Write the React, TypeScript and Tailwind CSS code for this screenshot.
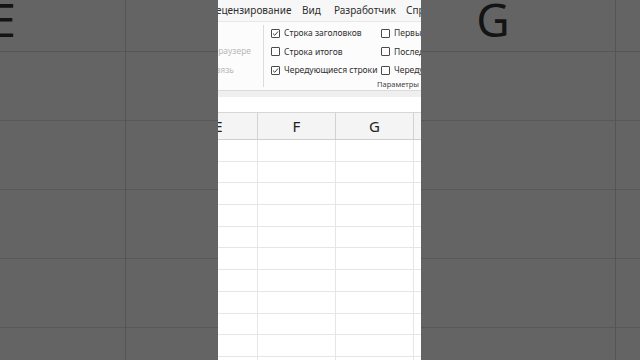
import React from "react";

const font = { fontFamily: '"Noto Sans", "Open Sans", sans-serif' };

function Box({ checked }: { checked?: boolean }) {
  return (
    <span className="w-[9px] h-[9px] border border-[#4a4a4a] rounded-[1px] bg-white flex items-center justify-center shrink-0">
      {checked && (
        <svg width="7" height="7" viewBox="0 0 7 7">
          <path d="M1 3.6 L2.8 5.3 L6 1.5" fill="none" stroke="#2f2f2f" strokeWidth="0.9" />
        </svg>
      )}
    </span>
  );
}

function Check({ label, checked, w }: { label: string; checked?: boolean; w: string }) {
  return (
    <div className={`h-[18.5px] flex items-center gap-[4px] ${w}`}>
      <Box checked={checked} />
      <span className="text-[8.5px] text-[#303030] whitespace-nowrap leading-none">{label}</span>
    </div>
  );
}

function BgColumns({ offset, letters }: { offset: string; letters: string[] }) {
  return (
    <div className={`flex ${offset}`}>
      {letters.map((l, i) => (
        <div key={i} className="w-[245px] shrink-0 border-r border-[#555555] flex flex-col">
          <div className="h-[52px] border-b border-[#555555] flex items-center justify-center pb-[14px]">
            <span className="text-[46px] text-[#141414] leading-none" style={font}>{l}</span>
          </div>
          {[0, 1, 2, 3, 4].map((r) => (
            <div key={r} className="h-[69px] border-b border-[#585858]" />
          ))}
        </div>
      ))}
    </div>
  );
}

export default function App() {
  return (
    <div className="w-[640px] h-[360px] flex overflow-hidden bg-[#646464]" style={font}>
      {/* left blurred sheet */}
      <div className="w-[218px] h-full overflow-hidden shrink-0">
        <BgColumns offset="-ml-[119px]" letters={["E", "", ""]} />
      </div>

      {/* middle strip */}
      <div className="w-[203px] h-full overflow-hidden shrink-0 bg-white flex flex-col">
        {/* tabs */}
        <div className="h-[22px] bg-[#f7f7f7] border-b border-[#e8e8e8] flex items-center whitespace-nowrap text-[10px] text-[#2e2e2e] shrink-0">
          <div className="-ml-[8px] flex">
            <span className="w-[92px] shrink-0">Рецензирование</span>
            <span className="w-[32px] shrink-0">Вид</span>
            <span className="w-[72px] shrink-0">Разработчик</span>
            <span className="shrink-0">Справка</span>
          </div>
        </div>
        {/* ribbon body */}
        <div className="h-[68px] bg-[#fcfcfc] flex shrink-0">
          <div className="w-[45px] shrink-0 flex flex-col pt-[2px] pr-[12px]">
            <div className="h-[18.5px]" />
            <div className="h-[18.5px] flex items-center justify-end whitespace-nowrap text-[8.5px] text-[#b8b8b8]">Открыть в браузере</div>
            <div className="h-[18.5px] flex items-center justify-end whitespace-nowrap text-[8.5px] text-[#b8b8b8] pr-[17px]">Удалить связь</div>
          </div>
          <div className="w-px bg-[#dcdcdc] my-[3px] shrink-0" />
          <div className="flex flex-col pt-[2px] pl-[7px] shrink-0">
            <div className="flex">
              <div className="flex flex-col">
                <Check label="Строка заголовков" checked w="w-[110px]" />
                <Check label="Строка итогов" w="w-[110px]" />
                <Check label="Чередующиеся строки" checked w="w-[110px]" />
              </div>
              <div className="flex flex-col">
                <Check label="Первый столбец" w="w-[100px]" />
                <Check label="Последний столбец" w="w-[100px]" />
                <Check label="Чередующиеся столбцы" w="w-[100px]" />
              </div>
            </div>
            <div className="h-[10px] flex items-center pl-[106px] whitespace-nowrap text-[7.5px] text-[#444444] leading-none">
              Параметры стилей таблиц
            </div>
          </div>
        </div>
        {/* band */}
        <div className="h-[7px] bg-[#efefef] border-t border-[#dadada] shrink-0" />
        {/* formula bar */}
        <div className="h-[16px] bg-white border-b border-[#d6d6d6] shrink-0" />
        {/* column header */}
        <div className="h-[27px] bg-[#f4f4f4] border-b border-[#cfcfcf] shrink-0 flex">
          <div className="-ml-[38px] flex">
            {["E", "F", "G", ""].map((c, i) => (
              <div key={i} className="w-[78px] shrink-0 border-r border-[#d2d2d2] flex items-center justify-center text-[15px] text-[#222222]">
                {c}
              </div>
            ))}
          </div>
        </div>
        {/* grid */}
        <div className="flex-1 overflow-hidden">
          <div className="-ml-[38px] flex">
            {[0, 1, 2, 3].map((c) => (
              <div key={c} className="w-[78px] shrink-0 border-r border-[#e6e6e6] flex flex-col">
                {Array.from({ length: 11 }).map((_, r) => (
                  <div key={r} className="h-[21.7px] border-b border-[#e6e6e6]" />
                ))}
              </div>
            ))}
          </div>
        </div>
      </div>

      {/* right blurred sheet */}
      <div className="flex-1 h-full overflow-hidden">
        <BgColumns offset="-ml-[50px]" letters={["G", ""]} />
      </div>
    </div>
  );
}
